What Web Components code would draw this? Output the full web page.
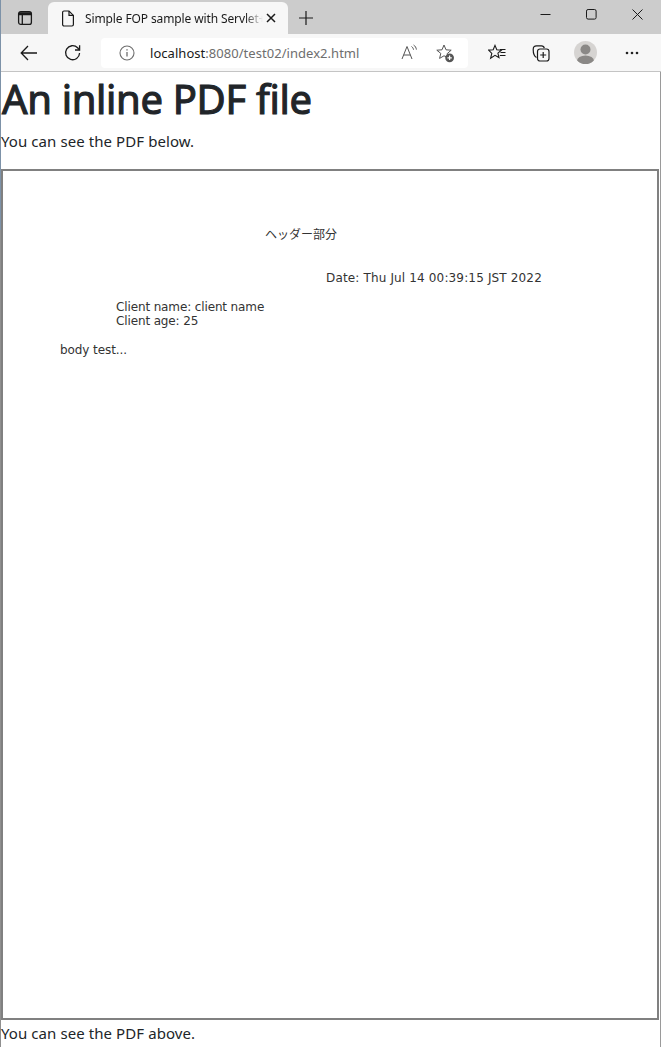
<!DOCTYPE html>
<html>
<head>
<meta charset="utf-8">
<title>Simple FOP sample with Servlet</title>
<style>
  html, body { margin: 0; padding: 0; background: #fff; }
  body { font-family: "Noto Sans", "Open Sans", sans-serif; width: 661px; height: 1047px; overflow: hidden; }
</style>
</head>
<body>
<browser-window>
  <tab-strip title-text="Simple FOP sample with Servlet+"></tab-strip>
  <nav-bar host-name="localhost" url-rest=":8080/test02/index2.html"></nav-bar>
  <inline-page heading="An inline PDF file">
    <pdf-viewer></pdf-viewer>
  </inline-page>
</browser-window>

<script>
class BrowserWindow extends HTMLElement {
  constructor() {
    super();
    this.attachShadow({ mode: 'open' });
    this.shadowRoot.innerHTML = `
      <style>
        :host {
          display: flex;
          flex-direction: column;
          width: 661px;
          height: 1047px;
          box-sizing: border-box;
          padding-left: 1px;
          background: linear-gradient(#7d92a8 0, #7d92a8 230px, #8f8f8f 230px);
          overflow: hidden;
        }
      </style>
      <slot></slot>
    `;
  }
}

class TabStrip extends HTMLElement {
  constructor() {
    super();
    this.attachShadow({ mode: 'open' });
    this.shadowRoot.innerHTML = `
      <style>
        :host {
          display: flex;
          height: 34px;
          flex: none;
          background: #cccccc;
          align-items: flex-end;
          color: #1a1a1a;
        }
        .side { width: 47px; height: 34px; display: flex; align-items: center; justify-content: center; padding-top: 1px; box-sizing: border-box; }
        .tab {
          width: 240px;
          height: 32px;
          background: #f7f7f7;
          border-radius: 6px 6px 0 0;
          display: flex;
          align-items: center;
          box-sizing: border-box;
          padding-left: 13px;
        }
        .title {
          font: 12px "Noto Sans", "Open Sans", sans-serif;
          letter-spacing: -0.12px;
          margin-left: 10px;
          width: 181px;
          flex: none;
          white-space: nowrap;
          -webkit-mask-image: linear-gradient(to right, #000 160px, transparent 178px);
          mask-image: linear-gradient(to right, #000 160px, transparent 178px);
        }
        .close { display: flex; }
        .new { width: 34px; height: 32px; display: flex; align-items: center; justify-content: center; margin-left: 1px; }
        .grow { flex: 1; }
        .win { width: 46px; height: 34px; display: flex; align-items: center; justify-content: center; padding-bottom: 6px; box-sizing: border-box; }
        svg { display: block; fill: none; stroke: currentColor; }
      </style>
      <div class="side">
        <svg width="16" height="16" viewBox="0 0 16 16" stroke-width="1.3"><rect x="1.6" y="1.6" width="12.8" height="12.8" rx="2.2"/><path d="M1.6 4.6h12.8M5.3 4.6v9.8"/><path d="M2 2.2h12v2.2H2z" fill="currentColor" stroke="none"/></svg>
      </div>
      <div class="tab">
        <svg width="14" height="17" viewBox="0 0 14 17" stroke-width="1.2"><path d="M1.6 2.4a1.4 1.4 0 0 1 1.4-1.4h5l4.4 4.4v9.2a1.4 1.4 0 0 1-1.4 1.4H3a1.4 1.4 0 0 1-1.4-1.4z"/><path d="M8 1v4.4h4.4"/></svg>
        <span class="title" id="title"></span>
        <span class="close"><svg width="10" height="10" viewBox="0 0 10 10" stroke-width="1.5"><path d="M1 1l8 8M9 1l-8 8"/></svg></span>
      </div>
      <div class="new"><svg width="14" height="14" viewBox="0 0 14 14" stroke-width="1.2"><path d="M7 0v14M0 7h14"/></svg></div>
      <div class="grow"></div>
      <div class="win"><svg width="11" height="11" viewBox="0 0 11 11"><path d="M.5 5.5h10"/></svg></div>
      <div class="win"><svg width="11" height="11" viewBox="0 0 11 11"><rect x=".5" y=".5" width="9.6" height="9.6" rx="1.6"/></svg></div>
      <div class="win" style="width:47px"><svg width="11" height="11" viewBox="0 0 11 11"><path d="M.5.5l10 10M10.5.5l-10 10"/></svg></div>
    `;
  }

  connectedCallback() {
    this.shadowRoot.getElementById('title').textContent = this.getAttribute('title-text');
  }
}

class NavBar extends HTMLElement {
  constructor() {
    super();
    this.attachShadow({ mode: 'open' });
    this.shadowRoot.innerHTML = `
      <style>
        :host {
          display: flex;
          height: 38px;
          flex: none;
          box-sizing: border-box;
          background: #f7f7f7;
          border-bottom: 1px solid #c4c4c4;
          align-items: center;
          color: #1a1a1a;
        }
        .btn { width: 44px; height: 37px; display: flex; align-items: center; justify-content: center; flex: none; }
        .address {
          width: 367px;
          height: 30px;
          flex: none;
          margin-left: 6px;
          background: #fff;
          border-radius: 4px;
          display: flex;
          align-items: center;
          box-sizing: border-box;
          padding-left: 18px;
          font: 13px "Noto Sans", "Open Sans", sans-serif;
          letter-spacing: 0.04px;
          color: #6e6e6e;
        }
        .address b { font-weight: 400; color: #1a1a1a; }
        .url { margin-left: 15px; width: 233px; white-space: nowrap; }
        .in { color: #555; display: flex; margin-left: 18px; flex: none; }
        .tools { display: flex; margin-left: 7px; align-items: center; }
        svg { display: block; fill: none; stroke: currentColor; }
        .avatar { width: 23px; height: 23px; border-radius: 50%; background: #d6d4d2; overflow: hidden; margin: 0 13px 0 11px; }
      </style>
      <div class="btn" style="margin-left:6px"><svg width="18" height="16" viewBox="0 0 18 16" stroke-width="1.3"><path d="M17 8H1.2M8 1L1.2 8 8 15"/></svg></div>
      <div class="btn"><svg width="18" height="18" viewBox="0 0 18 18" stroke-width="1.3"><path d="M15.6 9A7 7 0 1 1 13.6 3.8L15.6 6"/><path d="M15.6 1.2V6h-4.6"/></svg></div>
      <div class="address">
        <svg width="16" height="16" viewBox="0 0 16 16" stroke="#6e6e6e" stroke-width="1.1"><circle cx="8" cy="8" r="7"/><path d="M8 7v4.6" stroke-width="1.3"/><path d="M8 4.2v1.4" stroke-width="1.4"/></svg>
        <span class="url"><b id="host"></b><span id="rest"></span></span>
        <span class="in"><svg width="17" height="17" viewBox="0 0 17 17" stroke-width="1"><path d="M1 15L6 2.5 11 15M2.800 11h6.400"/><path d="M10.500 2.500c1.200.8 1.800 1.800 2 3.200M12.600 1c1.600 1 2.600 2.600 2.800 4.600"/></svg></span>
        <span class="in" style="margin-left:17px"><svg width="20" height="20" viewBox="0 0 20 20" stroke-width="1"><path d="M9 2l2 4.800 5.200.4-4 3.400 1 4-4.200-1.800-4.400 2.600 1.200-5L1.800 7.200l5.200-.4z"/><circle cx="14.600" cy="14.800" r="4.400" fill="#555" stroke="none"/><path d="M14.600 12.600v4.400M12.400 14.800h4.400" stroke="#fff" stroke-width="1.200"/></svg></span>
      </div>
      <div class="tools">
        <div class="btn"><svg width="18" height="17" viewBox="0 0 18 17" stroke-width="1.100"><path d="M7 1.400l1.800 4.400 4.600.3-3.500 3 1.100 4.500L7 11.300l-4.400 3 1.200-5L.6 6.100l4.600-.3z"/><path d="M12 5.500h5.500M12.500 8.500h5M11.800 11.500h5.700"/></svg></div>
        <div class="btn"><svg width="18" height="18" viewBox="0 0 18 18" stroke-width="1.200"><path d="M4.500 13.500C2.500 12.500 1.200 9 1.200 5.500 1.200 3 2.500 1.800 4.500 1.800h5c1.500 0 2.500.8 2.800 2.200"/><rect x="5.500" y="5" width="11.500" height="12" rx="2.500"/><path d="M11.200 8v6M8.200 11h6"/></svg></div>
        <div class="avatar"><svg width="23" height="23" viewBox="0 0 23 23" style="fill:#8a8886;stroke:none"><circle cx="11.500" cy="8.500" r="5"/><ellipse cx="11.500" cy="20" rx="8.500" ry="5.500"/></svg></div>
        <div class="btn"><svg width="16" height="4" viewBox="0 0 16 4" style="fill:#222;stroke:none"><circle cx="3" cy="2" r="1.300"/><circle cx="8" cy="2" r="1.300"/><circle cx="13" cy="2" r="1.300"/></svg></div>
      </div>
    `;
  }

  connectedCallback() {
    this.shadowRoot.getElementById('host').textContent = this.getAttribute('host-name');
    this.shadowRoot.getElementById('rest').textContent = this.getAttribute('url-rest');
  }
}

class InlinePage extends HTMLElement {
  constructor() {
    super();
    this.attachShadow({ mode: 'open' });
    this.shadowRoot.innerHTML = `
      <style>
        :host {
          display: block;
          flex: 1;
          background: #fff;
          color: #212529;
          font: 15px/24px "Noto Sans", "Open Sans", sans-serif;
          letter-spacing: 0.08px;
          box-sizing: border-box;
          border-right: 1px solid #9a9a9a;
        }
        h1 { margin: 0; font-size: 40px; line-height: 48px; font-weight: 400; -webkit-text-stroke: 1.1px #212529; letter-spacing: -0.33px; height: 57px; padding: 3px 0 0 1px; box-sizing: border-box; }
        p { margin: 0; }
        .below { height: 40px; }
        .above { padding-top: 1px; }
      </style>
      <h1 id="heading"></h1>
      <p class="below">You can see the PDF below.</p>
      <slot></slot>
      <p class="above">You can see the PDF above.</p>
    `;
  }

  connectedCallback() {
    this.shadowRoot.getElementById('heading').textContent = this.getAttribute('heading');
  }
}

class PdfViewer extends HTMLElement {
  constructor() {
    super();
    this.attachShadow({ mode: 'open' });
    this.shadowRoot.innerHTML = `
      <style>
        :host {
          display: block;
          width: 658px;
          height: 851px;
          box-sizing: border-box;
          border: 2px solid #808080;
          color: #333;
          font: 12px/14px "DejaVu Sans", "Noto Sans CJK JP", sans-serif;
          letter-spacing: 0;
          padding-top: 57px;
        }
        div { white-space: nowrap; }
        .head { padding-left: 262px; height: 43px; }
        .date { padding-left: 323px; height: 29px; letter-spacing: 0.15px; }
        .client { padding-left: 113px; height: 43px; letter-spacing: -0.13px; }
        .client div { height: 14px; }
        .body { padding-left: 57px; letter-spacing: -0.08px; }
      </style>
      <div class="head">ヘッダー部分</div>
      <div class="date">Date: Thu Jul 14 00:39:15 JST 2022</div>
      <div class="client"><div>Client name: client name</div><div>Client age: 25</div></div>
      <div class="body">body test...</div>
    `;
  }
}

customElements.define('browser-window', BrowserWindow);
customElements.define('tab-strip', TabStrip);
customElements.define('nav-bar', NavBar);
customElements.define('inline-page', InlinePage);
customElements.define('pdf-viewer', PdfViewer);
</script>
</body>
</html>
